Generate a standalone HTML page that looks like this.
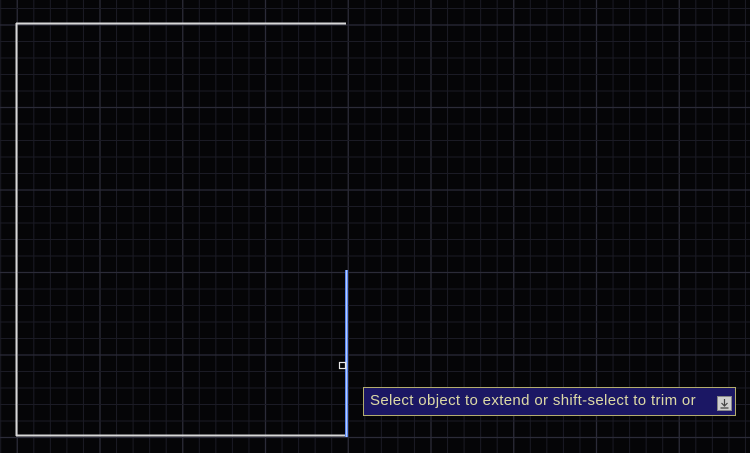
<!DOCTYPE html>
<html><head><style>
html,body{margin:0;padding:0;background:#050507;width:750px;height:453px;overflow:hidden}
svg{position:absolute;left:0;top:0}
.tip{position:absolute;left:363px;top:387px;width:371px;height:27px;background:#1b1764;border:1px solid #b3ad6e;box-sizing:content-box}
.tip span{position:absolute;left:6px;top:4px;font:15px "Liberation Sans",sans-serif;letter-spacing:0.35px;color:#dcd9a6;white-space:nowrap}
.ic{position:absolute;left:353px;top:8px;width:13px;height:13px;background:#cfcfcf;border:1px solid #888}
</style></head><body>
<svg width="750" height="453" xmlns="http://www.w3.org/2000/svg">
<g id="g"></g>
<path d="M16 23.5H346M16.5 23V436M16 435.5H346" stroke="#d8d8d8" stroke-width="2" fill="none"/>
<line x1="346.5" y1="270" x2="346.5" y2="437" stroke="#5b86f0" stroke-width="3"/>
<line x1="346.5" y1="270" x2="346.5" y2="437" stroke="#cfe0ff" stroke-width="0.8"/>
<rect x="339.5" y="362.5" width="6" height="6" fill="none" stroke="#e8e8e8" stroke-width="1.2"/>
</svg>
<div class="tip"><span>Select object to extend or shift-select to trim or</span>
<div class="ic"><svg width="13" height="13"><path d="M6.5 2V9M3.5 6L6.5 9L9.5 6M2.5 11H10.5" stroke="#444" stroke-width="1.2" fill="none"/></svg></div></div>
<script>
var g=document.getElementById('g'),s='';
for(var i=-10;i<60;i++){var x=100+i*16.55;if(x<0||x>750)continue;var m=(i%5==0);
s+='<line x1="'+x+'" y1="0" x2="'+x+'" y2="453" stroke="'+(m?'#2b2b38':'#1b1b25')+'" stroke-width="'+(m?1.3:1)+'"/>';}
for(var j=-20;j<30;j++){var y=190+j*16.5;if(y<0||y>453)continue;var m=(j%5==0);
s+='<line x1="0" y1="'+y+'" x2="750" y2="'+y+'" stroke="'+(m?'#2b2b38':'#1b1b25')+'" stroke-width="'+(m?1.3:1)+'"/>';}
g.innerHTML=s;
</script>
</body></html>
